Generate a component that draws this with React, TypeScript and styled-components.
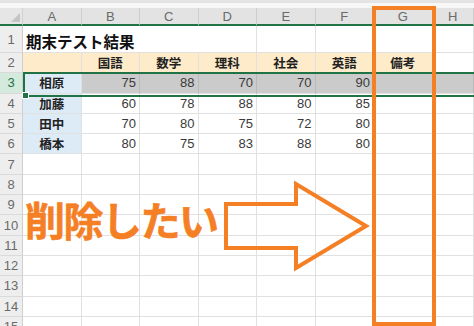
import React from 'react';
import styled, { createGlobalStyle, css } from 'styled-components';

const GlobalStyle = createGlobalStyle`
    html, body {
        margin: 0;
        padding: 0;
        background: #ffffff;
    }
    body {
        width: 474px;
        height: 326px;
        overflow: hidden;
        font-family: 'Liberation Sans', 'Noto Sans CJK JP', sans-serif;
    }
`;

const orange = '#f57f24';
const green = '#217346';
const gridLine = '#e1e1e1';
const colWidths = '23px repeat(7, 58.5px) 1fr';
const rowHeights = '18px 27px repeat(14, 20.3px)';

const Page = styled.div`
    position: relative;
    width: 474px;
    height: 326px;
    overflow: hidden;
`;

const RibbonEdge = styled.div`
    height: 8px;
    background: linear-gradient(#e4e4e4 0 3px, #f7f7f7 3px 8px);
`;

const Sheet = styled.div`
    display: grid;
    grid-template-columns: ${colWidths};
    grid-template-rows: ${rowHeights};
    font-size: 13px;
    color: #333333;
`;

const Corner = styled.div`
    background: #e6e6e6;
    border-right: 1px solid #d0d0d0;
    border-bottom: 2px solid ${green};
    position: relative;
    &::after {
        content: '';
        position: absolute;
        right: 2px;
        bottom: 2px;
        border-left: 9px solid transparent;
        border-bottom: 9px solid #c4c4c4;
    }
`;

const ColHead = styled.div`
    display: flex;
    align-items: center;
    justify-content: center;
    background: #e3e3e3;
    color: #6a6a6a;
    font-size: 13px;
    border-right: 1px solid #cdcdcd;
    border-bottom: 2px solid ${green};
`;

const RowHead = styled.div<{ $active?: boolean }>`
    display: flex;
    align-items: center;
    justify-content: center;
    background: #eeeeee;
    color: #6a6a6a;
    font-size: 13px;
    border-right: 1px solid #cfcfcf;
    border-bottom: 1px solid #dadada;
    ${({ $active }) =>
        $active &&
        css`
            background: #d3eadc;
            color: ${green};
        `}
`;

type Tone = 'plain' | 'cream' | 'blue' | 'selected';

const tones: Record<Tone, string> = {
    plain: '#ffffff',
    cream: '#fdebc9',
    blue: '#ddebf7',
    selected: '#cbcbcb'
};

const Cell = styled.div<{ $tone?: Tone }>`
    display: flex;
    align-items: center;
    justify-content: flex-start;
    padding: 0 3px;
    background: ${({ $tone }) => tones[$tone ?? 'plain']};
    border-right: 1px solid ${({ $tone }) => ($tone === 'selected' ? '#b9b9b9' : gridLine)};
    border-bottom: 1px solid ${gridLine};
    white-space: nowrap;
`;

// bold centred labels: subject headings and student names
const Label = styled(Cell)`
    justify-content: center;
    text-align: center;
    font-family: 'Noto Sans CJK JP', sans-serif;
    font-size: 12.5px;
    font-weight: 700;
    color: #222222;
`;

const Num = styled(Cell)`
    justify-content: flex-end;
    color: #3a3a3a;
`;

const Title = styled(Cell)`
    grid-column: span 3;
    border-right: none;
    font-family: 'Noto Sans CJK JP', sans-serif;
    font-size: 15.5px;
    font-weight: 700;
    color: #111111;
    padding-top: 3px;
`;

const SelectionFrame = styled.div`
    position: absolute;
    left: 23px;
    top: 72px;
    width: 470px;
    height: 21px;
    border: 2px solid ${green};
    pointer-events: none;
    &::after {
        content: '';
        position: absolute;
        left: -3px;
        bottom: -4px;
        width: 5px;
        height: 5px;
        background: ${green};
        border: 1px solid #ffffff;
    }
`;

const Overlay = styled.svg`
    position: absolute;
    left: 0;
    top: 0;
    pointer-events: none;
`;

const Callout = styled.div`
    position: absolute;
    left: 25px;
    top: 199px;
    font-family: 'Noto Sans CJK JP', sans-serif;
    font-size: 40px;
    font-weight: 700;
    letter-spacing: -1.5px;
    line-height: 1;
    color: ${orange};
    -webkit-text-stroke: 0.6px ${orange};
`;

const columns = ['A', 'B', 'C', 'D', 'E', 'F', 'G', 'H'];
const subjects = ['国語', '数学', '理科', '社会', '英語', '備考'];
const students: [string, number[]][] = [
    ['相原', [75, 88, 70, 70, 90]],
    ['加藤', [60, 78, 88, 80, 85]],
    ['田中', [70, 80, 75, 72, 80]],
    ['橋本', [80, 75, 83, 88, 80]]
];

export default function App() {
    const rows: React.ReactNode[] = [];

    // row 1: title
    rows.push(<RowHead key="h1">1</RowHead>);
    rows.push(<Title key="t">期末テスト結果</Title>);
    for (let c = 3; c < 8; c++) rows.push(<Cell key={`r1-${c}`} />);

    // row 2: subject headings
    rows.push(<RowHead key="h2">2</RowHead>);
    rows.push(<Cell key="r2-0" $tone="cream" />);
    subjects.forEach((s) =>
        rows.push(
            <Label key={s} $tone="cream">
                {s}
            </Label>
        )
    );
    rows.push(<Cell key="r2-h" />);

    // rows 3-6: scores, row 3 selected
    students.forEach(([name, scores], i) => {
        const tone: Tone = i === 0 ? 'selected' : 'plain';
        rows.push(
            <RowHead key={`h${i + 3}`} $active={i === 0}>
                {i + 3}
            </RowHead>
        );
        rows.push(
            <Label key={name} $tone="blue">
                {name}
            </Label>
        );
        scores.forEach((v, j) =>
            rows.push(
                <Num key={`${name}-${j}`} $tone={tone}>
                    {v}
                </Num>
            )
        );
        rows.push(<Cell key={`${name}-g`} $tone={tone} />);
        rows.push(<Cell key={`${name}-h`} $tone={tone} />);
    });

    // empty rows 7-15
    for (let r = 7; r <= 15; r++) {
        rows.push(<RowHead key={`h${r}`}>{r}</RowHead>);
        for (let c = 0; c < 8; c++) rows.push(<Cell key={`r${r}-${c}`} />);
    }

    return (
        <Page>
            <GlobalStyle />
            <RibbonEdge />
            <Sheet>
                <Corner />
                {columns.map((c) => (
                    <ColHead key={c}>{c}</ColHead>
                ))}
                {rows}
            </Sheet>
            <SelectionFrame />
            <Callout>削除したい</Callout>
            <Overlay width="474" height="326" viewBox="0 0 474 326">
                <rect x="374" y="8" width="60" height="316" fill="none" stroke={orange} strokeWidth="4" />
                <polygon
                    points="226,204 296,204 296,184 366,226 296,268 296,248 226,248"
                    fill="none"
                    stroke={orange}
                    strokeWidth="4"
                />
            </Overlay>
        </Page>
    );
}
